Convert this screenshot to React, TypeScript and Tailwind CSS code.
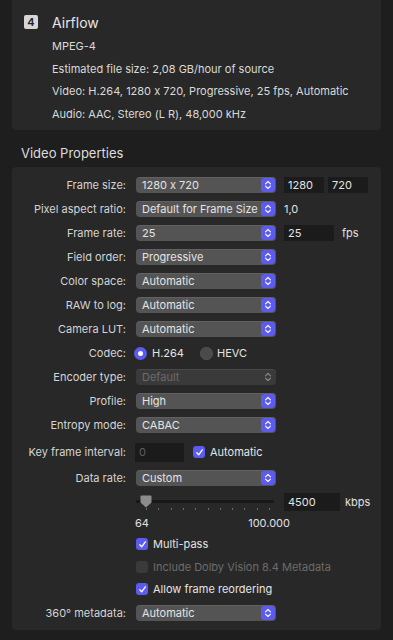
import React from "react";

const font = { fontFamily: "Inter, 'Noto Sans', sans-serif" };

function Stepper({ disabled }: { disabled?: boolean }) {
  return (
    <div
      className={
        "flex h-[14px] w-[14px] shrink-0 items-center justify-center rounded-[3px] " +
        (disabled ? "bg-transparent" : "bg-[#5b5bf0]")
      }
    >
      <svg width="8" height="10" viewBox="0 0 8 10" fill="none">
        <path
          d="M1.5 3.8 L4 1.5 L6.5 3.8 M1.5 6.2 L4 8.5 L6.5 6.2"
          stroke={disabled ? "#8a8a8a" : "#ffffff"}
          strokeWidth="1.1"
          strokeLinecap="round"
          strokeLinejoin="round"
        />
      </svg>
    </div>
  );
}

function Popup({ value, disabled }: { value: string; disabled?: boolean }) {
  return (
    <div
      className={
        "flex h-[16px] w-[140px] items-center justify-between rounded-[4px] pl-[6px] pr-[1px] shadow-[inset_0_1px_0_rgba(255,255,255,0.08)] " +
        (disabled ? "bg-[#3a3a3a] text-[#6b6b6b]" : "bg-[#545454] text-[#e4e4e4]")
      }
    >
      <span className="whitespace-nowrap text-[11px] leading-[16px]">{value}</span>
      <Stepper disabled={disabled} />
    </div>
  );
}

function Field({ value, w, h = 16, dim }: { value: string; w: number; h?: number; dim?: boolean }) {
  return (
    <div
      className={"flex items-center bg-[#1b1b1b] pl-[4px] text-[11px] " + (dim ? "text-[#5e5e5e]" : "text-[#e4e4e4]")}
      style={{ width: w, height: h }}
    >
      {value}
    </div>
  );
}

function Check({ disabled }: { disabled?: boolean }) {
  if (disabled)
    return <div className="h-[12px] w-[12px] rounded-[3px] bg-[#3a3a3a]" />;
  return (
    <div className="flex h-[12px] w-[12px] items-center justify-center rounded-[3px] bg-[#5b5bf0]">
      <svg width="9" height="9" viewBox="0 0 9 9" fill="none">
        <path d="M1.8 4.8 L3.7 6.8 L7.3 1.8" stroke="#fff" strokeWidth="1.3" strokeLinecap="round" strokeLinejoin="round" />
      </svg>
    </div>
  );
}

function Row({
  label,
  h = 24,
  children,
}: {
  label?: string;
  h?: number;
  children?: React.ReactNode;
}) {
  return (
    <div className="flex items-center" style={{ height: h }}>
      <div className="w-[114px] shrink-0 text-right text-[11px] text-[#d4d4d4]">{label ?? ""}</div>
      <div className="ml-[10px] flex items-center">{children}</div>
    </div>
  );
}

export default function App() {
  const ticks = Array.from({ length: 11 }, (_, i) => i);
  return (
    <div className="h-[640px] w-[393px] overflow-hidden bg-[#1e1e1e] [font-feature-settings:'calt'_0]" style={font}>
      {/* Top summary card */}
      <div className="mx-[12px] rounded-b-[4px] bg-[#282828] pb-[5px] pl-[12px] pt-[13px] text-[#dadada]">
        <div className="flex h-[18px] items-center">
          <div className="flex h-[14px] w-[14px] items-center justify-center rounded-[2px] bg-[#d6d6d6] text-[11px] font-semibold text-[#222]">
            4
          </div>
          <div className="ml-[14px] text-[14px] text-[#e6e6e6]">Airflow</div>
        </div>
        <div className="mt-[4px] pl-[28px] text-[11px]">
          <div className="flex h-[22.5px] items-center">MPEG-4</div>
          <div className="flex h-[22.5px] items-center">Estimated file size: 2,08 GB/hour of source</div>
          <div className="flex h-[22.5px] items-center">Video: H.264, 1280 x 720, Progressive, 25 fps, Automatic</div>
          <div className="flex h-[22.5px] items-center">Audio: AAC, Stereo (L R), 48,000 kHz</div>
        </div>
      </div>

      <div className="mt-[14px] flex h-[20px] items-center pl-[21px] text-[13px] text-[#dedede]">Video Properties</div>

      <div className="mx-[12px] mt-[3px] rounded-[4px] bg-[#282828] pb-[5px] pt-[6px]">
        <Row label="Frame size:">
          <Popup value="1280 x 720" />
          <div className="ml-[8px] flex gap-[4px]">
            <Field value="1280" w={40} />
            <Field value="720" w={40} />
          </div>
        </Row>
        <Row label="Pixel aspect ratio:">
          <Popup value="Default for Frame Size" />
          <span className="ml-[8px] text-[11px] text-[#e0e0e0]">1,0</span>
        </Row>
        <Row label="Frame rate:">
          <Popup value="25" />
          <div className="ml-[8px]">
            <Field value="25" w={50} />
          </div>
          <span className="ml-[8px] text-[11px] text-[#e0e0e0]">fps</span>
        </Row>
        <Row label="Field order:">
          <Popup value="Progressive" />
        </Row>
        <Row label="Color space:">
          <Popup value="Automatic" />
        </Row>
        <Row label="RAW to log:">
          <Popup value="Automatic" />
        </Row>
        <Row label="Camera LUT:">
          <Popup value="Automatic" />
        </Row>
        <Row label="Codec:">
          <div className="-ml-[2px] flex items-center">
            <div className="flex h-[13px] w-[13px] items-center justify-center rounded-full bg-[#5b5bf0]">
              <div className="h-[5px] w-[5px] rounded-full bg-white" />
            </div>
            <span className="ml-[5px] text-[11px] text-[#e4e4e4]">H.264</span>
            <div className="ml-[16px] h-[13px] w-[13px] rounded-full bg-[#4a4a4a] shadow-[inset_0_0_0_0.5px_rgba(255,255,255,0.1)]" />
            <span className="ml-[4px] text-[11px] text-[#e4e4e4]">HEVC</span>
          </div>
        </Row>
        <Row label="Encoder type:">
          <Popup value="Default" disabled />
        </Row>
        <Row label="Profile:">
          <Popup value="High" />
        </Row>
        <Row label="Entropy mode:">
          <Popup value="CABAC" />
        </Row>
        <Row label="Key frame interval:" h={30}>
          <div className="-ml-[1px]">
            <Field value="0" w={49} h={19} dim />
          </div>
          <div className="ml-[9px]">
            <Check />
          </div>
          <span className="ml-[5px] text-[11px] text-[#e4e4e4]">Automatic</span>
        </Row>
        <Row label="Data rate:" h={22}>
          <Popup value="Custom" />
        </Row>
        <Row h={26}>
          <div className="relative h-[26px] w-[140px]">
            <div className="absolute left-0 right-[2px] top-[11px] h-[3px] rounded-full bg-[#181818]" />
            {ticks.map((i) => (
              <div
                key={i}
                className="absolute top-[19px] h-[2px] w-[1px] bg-[#6a6a6a]"
                style={{ left: 10 + i * 12.3 }}
              />
            ))}
            <svg className="absolute left-[4px] top-[6px]" width="12" height="13" viewBox="0 0 12 13">
              <path d="M1.5 0.5 H10.5 A1 1 0 0 1 11.5 1.5 V7.5 L6 12.5 L0.5 7.5 V1.5 A1 1 0 0 1 1.5 0.5 Z" fill="#8c8c8c" />
            </svg>
          </div>
          <div className="ml-[8px]">
            <Field value="4500" w={56} h={18} />
          </div>
          <span className="ml-[5px] text-[11px] text-[#e0e0e0]">kbps</span>
        </Row>
        <Row h={16}>
          <div className="-ml-[1px] flex w-[155px] justify-between text-[11px] text-[#e0e0e0]">
            <span>64</span>
            <span>100.000</span>
          </div>
        </Row>
        <Row h={26}>
          <Check />
          <span className="ml-[5px] text-[11px] text-[#e4e4e4]">Multi-pass</span>
        </Row>
        <Row h={20}>
          <Check disabled />
          <span className="ml-[5px] text-[11px] text-[#6c6c6c]">Include Dolby Vision 8.4 Metadata</span>
        </Row>
        <Row h={24}>
          <Check />
          <span className="ml-[5px] text-[11px] text-[#e4e4e4]">Allow frame reordering</span>
        </Row>
        <Row label="360° metadata:">
          <Popup value="Automatic" />
        </Row>
      </div>
    </div>
  );
}
